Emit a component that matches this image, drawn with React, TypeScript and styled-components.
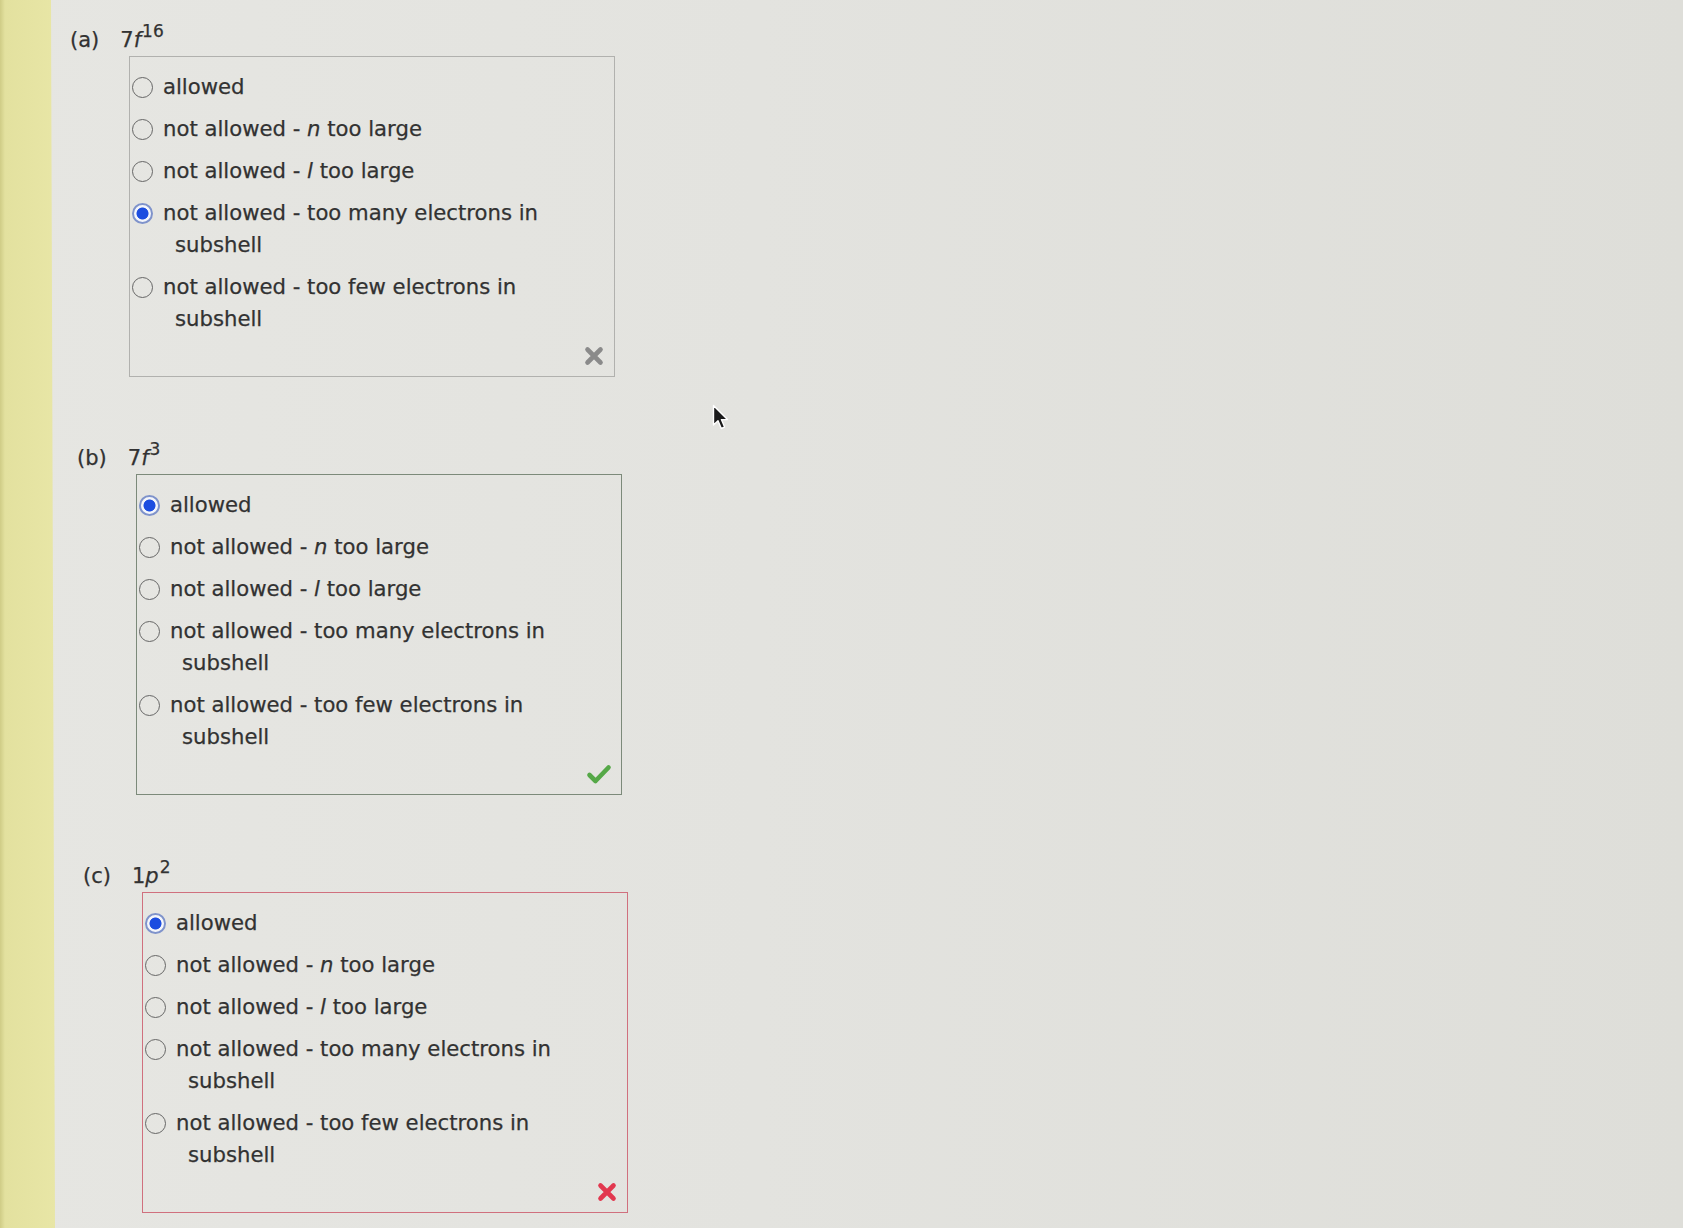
import React from 'react';
import styled, { createGlobalStyle } from 'styled-components';

const GlobalStyle = createGlobalStyle`
  html, body {
    margin: 0;
    padding: 0;
  }
  body {
    background: linear-gradient(90deg, #e6e6e2 0%, #e3e3df 45%, #dedeD9 100%);
    font-family: 'DejaVu Sans', Verdana, sans-serif;
    color: #323232;
  }
`;

const Page = styled.div`
  position: relative;
  display: flex;
  width: 1683px;
  height: 1228px;
  overflow: hidden;
`;

const Strip = styled.div`
  flex: 0 0 56px;
  background: linear-gradient(90deg, #cfcc86 0px, #e3e19f 5px, #e8e6a6 100%);
  clip-path: polygon(0 0, 51px 0, 55px 100%, 0 100%);
`;

const Content = styled.main`
  flex: 1;
  padding: 26px 0 0 14px;
  display: flex;
  flex-direction: column;
`;

const Section = styled.section<{ $shift: number }>`
  margin-left: ${(p) => p.$shift}px;
  margin-bottom: 67px;
`;

const Label = styled.div`
  display: flex;
  align-items: baseline;
  gap: 21px;
  height: 28px;
  line-height: 28px;
  font-size: 21px;
  margin-bottom: 2px;
  -webkit-text-stroke: 0.25px #323232;
`;

const Formula = styled.span`
  font-size: 21px;
  i {
    font-style: italic;
  }
  sup {
    font-size: 17px;
    vertical-align: 10px;
    line-height: 0;
    margin-left: 1px;
  }
`;

type Tone = 'neutral' | 'correct' | 'wrong';

const borderColors: Record<Tone, string> = {
  neutral: '#b1b1ae',
  correct: '#7c8a7a',
  wrong: '#d0707e',
};

const Box = styled.div<{ $tone: Tone }>`
  margin-left: 59px;
  width: 486px;
  box-sizing: border-box;
  border: 1.5px solid ${(p) => borderColors[p.$tone]};
  padding: 14px 9px 9px 2px;
`;

const Option = styled.div`
  display: flex;
  align-items: flex-start;
  gap: 10px;
  margin-bottom: 10px;
`;

const Radio = styled.span<{ $checked: boolean }>`
  flex: 0 0 21px;
  width: 21px;
  height: 21px;
  margin-top: 5.5px;
  box-sizing: border-box;
  border-radius: 50%;
  border: ${(p) => (p.$checked ? '2.5px solid #7f93cb' : '1.6px solid #666666')};
  background: ${(p) =>
    p.$checked
      ? 'radial-gradient(circle, #1c4de0 0, #1c4de0 5.6px, #f4f6fb 6.4px)'
      : 'transparent'};
`;

const OptionText = styled.div`
  box-sizing: border-box;
  max-width: 414px;
  font-size: 21.2px;
  line-height: 32px;
  padding-left: 12px;
  text-indent: -12px;
  -webkit-text-stroke: 0.25px #323232;
`;

const Feedback = styled.div`
  display: flex;
  justify-content: flex-end;
  height: 22px;
`;

const Cursor = styled.svg`
  position: absolute;
  left: 712px;
  top: 404px;
`;

const XMark = ({ color }: { color: string }) => (
  <svg width="22" height="22" viewBox="0 0 22 22">
    <path
      d="M4.5 4.5 L17.5 17.5 M17.5 4.5 L4.5 17.5"
      stroke={color}
      strokeWidth="4.6"
      strokeLinecap="round"
      fill="none"
    />
  </svg>
);

const CheckMark = () => (
  <svg width="26" height="22" viewBox="0 0 26 22">
    <path
      d="M3.5 12 L9.5 18 L22.5 4.5"
      stroke="#55a847"
      strokeWidth="4.6"
      strokeLinecap="round"
      strokeLinejoin="round"
      fill="none"
    />
  </svg>
);

const OPTIONS: React.ReactNode[] = [
  'allowed',
  <>
    not allowed - <i>n</i> too large
  </>,
  <>
    not allowed - <i>l</i> too large
  </>,
  'not allowed - too many electrons in subshell',
  'not allowed - too few electrons in subshell',
];

const QUESTIONS: {
  id: string;
  base: string;
  orbital: string;
  count: string;
  selected: number;
  tone: Tone;
  shift: number;
}[] = [
  { id: 'a', base: '7', orbital: 'f', count: '16', selected: 3, tone: 'neutral', shift: 0 },
  { id: 'b', base: '7', orbital: 'f', count: '3', selected: 0, tone: 'correct', shift: 7 },
  { id: 'c', base: '1', orbital: 'p', count: '2', selected: 0, tone: 'wrong', shift: 13 },
];

export default function App() {
  return (
    <>
      <GlobalStyle />
      <Page>
        <Strip />
        <Content>
          {QUESTIONS.map((q) => (
            <Section key={q.id} $shift={q.shift}>
              <Label>
                <span>({q.id})</span>
                <Formula>
                  {q.base}
                  <i>{q.orbital}</i>
                  <sup>{q.count}</sup>
                </Formula>
              </Label>
              <Box $tone={q.tone}>
                {OPTIONS.map((text, i) => (
                  <Option key={i}>
                    <Radio $checked={i === q.selected} />
                    <OptionText>{text}</OptionText>
                  </Option>
                ))}
                <Feedback>
                  {q.tone === 'correct' ? (
                    <CheckMark />
                  ) : (
                    <XMark color={q.tone === 'wrong' ? '#e2384f' : '#8a8a8a'} />
                  )}
                </Feedback>
              </Box>
            </Section>
          ))}
        </Content>
        <Cursor width="18" height="28" viewBox="0 0 18 28">
          <path
            d="M1.5 1.5 L1.5 21 L6 16.8 L9.3 24.5 L12.6 23.1 L9.4 15.6 L15.5 15.6 Z"
            fill="#1b1b1b"
            stroke="#ffffff"
            strokeWidth="1.4"
            strokeLinejoin="round"
          />
        </Cursor>
      </Page>
    </>
  );
}
